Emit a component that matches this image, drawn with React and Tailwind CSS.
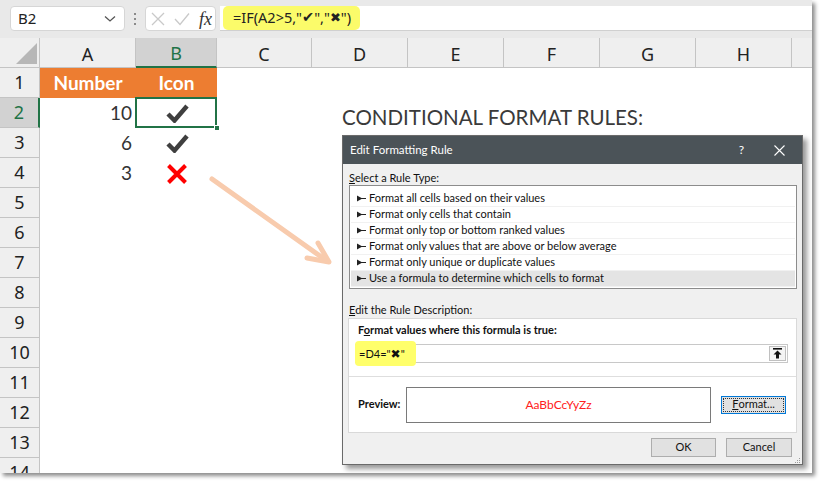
import React from 'react';

const cols = [
  { id: 'A', w: 'w-[96px]' },
  { id: 'B', w: 'w-[81px]', sel: true },
  { id: 'C', w: 'w-[95px]' },
  { id: 'D', w: 'w-[96px]' },
  { id: 'E', w: 'w-[96px]' },
  { id: 'F', w: 'w-[96px]' },
  { id: 'G', w: 'w-[96px]' },
  { id: 'H', w: 'w-[96px]' },
];

const rows = [
  { n: 1, a: 'Number', b: 'Icon', head: true },
  { n: 2, a: '10', b: 'check', sel: true },
  { n: 3, a: '6', b: 'check' },
  { n: 4, a: '3', b: 'cross' },
  { n: 5 }, { n: 6 }, { n: 7 }, { n: 8 }, { n: 9 }, { n: 10 },
  { n: 11 }, { n: 12 }, { n: 13 }, { n: 14 },
];

const ruleTypes = [
  'Format all cells based on their values',
  'Format only cells that contain',
  'Format only top or bottom ranked values',
  'Format only values that are above or below average',
  'Format only unique or duplicate values',
  'Use a formula to determine which cells to format',
];

const uiFont = { fontFamily: '"Noto Sans", "Open Sans", sans-serif' };
const cellFont = { fontFamily: 'Lato, "Liberation Sans", sans-serif' };
const dlgFont = { fontFamily: 'Lato, "Liberation Sans", sans-serif' };
const symFont = { fontFamily: '"DejaVu Sans", sans-serif' };

const ListArrow = () => (
  <svg width="9" height="7" viewBox="0 0 9 7" className="shrink-0">
    <polygon points="0,0.5 4.5,3 4.5,4 0,6.5" fill="#222" />
    <rect x="4" y="3" width="5" height="1" fill="#222" />
  </svg>
);

const FormulaBar = () => (
  <div className="flex h-[38px] shrink-0 items-start bg-[#e9e9e9] pt-[6px]" style={uiFont}>
    <div className="ml-[10px] flex h-[25px] w-[115px] items-center justify-between rounded-[4px] border border-[#d6d6d6] bg-white pl-[7px] pr-[8px]">
      <span className="text-[15px] text-[#222]">B2</span>
      <svg width="12" height="8" viewBox="0 0 12 8">
        <path d="M1 1.5 L6 6 L11 1.5" fill="none" stroke="#555" strokeWidth="1.3" />
      </svg>
    </div>
    <div className="ml-[9px] flex h-[25px] flex-col items-center justify-center gap-[3px]">
      <span className="h-[2px] w-[2px] bg-[#8a8a8a]" />
      <span className="h-[2px] w-[2px] bg-[#8a8a8a]" />
      <span className="h-[2px] w-[2px] bg-[#8a8a8a]" />
    </div>
    <div className="ml-[9px] flex h-[25px] w-[71px] items-center rounded-[4px] border border-[#d6d6d6] bg-white pl-[5px]">
      <svg width="14" height="14" viewBox="0 0 14 14">
        <path d="M1 1 L13 13 M13 1 L1 13" stroke="#c9c9c9" strokeWidth="1.3" />
      </svg>
      <svg width="16" height="14" viewBox="0 0 16 14" className="ml-[9px]">
        <path d="M1 7 L6 12.5 L15 1.5" fill="none" stroke="#c9c9c9" strokeWidth="1.3" />
      </svg>
      <span className="ml-[9px] text-[18px] italic leading-none text-[#333]" style={{ fontFamily: '"Liberation Serif", serif' }}>
        fx
      </span>
    </div>
    <div className="ml-[4px] flex h-[25px] flex-1 items-center border-b border-[#d0d0d0] bg-white pl-[3px]">
      <div className="flex h-[24px] w-[137px] items-center rounded-[5px] bg-[#fbfb6a] pl-[10px] text-[14.5px] text-[#222]">
        =IF(A2&gt;5,"<span className="font-bold" style={symFont}>✔</span>","<span className="text-[13px] font-bold" style={symFont}>✖</span>")
      </div>
    </div>
  </div>
);

const ColumnHeaders = () => (
  <div className="flex h-[30px] shrink-0 bg-[#efefef] text-[18px] text-[#222]" style={uiFont}>
    <div className="relative w-[40px] shrink-0 border-b border-r border-[#c4c4c4]">
      <svg width="40" height="30" viewBox="0 0 40 30" className="absolute left-0 top-0">
        <polygon points="16,26 37,26 37,5" fill="#b7b7b7" />
      </svg>
    </div>
    {cols.map((c) => (
      <div
        key={c.id}
        className={`${c.w} flex shrink-0 items-center justify-center border-r ${
          c.sel
            ? 'border-b-2 border-r-[#c4c4c4] border-b-[#217346] bg-[#d2d2d2] text-[#217346]'
            : 'border-b border-[#c4c4c4]'
        }`}
      >
        <span className="pt-[3px]">{c.id}</span>
      </div>
    ))}
    <div className="flex-1 border-b border-[#c4c4c4]" />
  </div>
);

// cell values drawn as icons, like Segoe UI Symbol renders them in Excel
const CellIcon = ({ kind }) => {
  if (kind === 'check') {
    return (
      <svg width="24" height="20" viewBox="0 0 24 20" className="mt-[-1px]">
        <path d="M3 11 L9.5 17.5 L22 3" fill="none" stroke="#3f3f3f" strokeWidth="4.5" strokeLinejoin="miter" />
      </svg>
    );
  }
  if (kind === 'cross') {
    return (
      <svg width="22" height="22" viewBox="0 0 22 22" className="mt-[1px]">
        <path d="M2.5 2.5 L19.5 19.5 M19.5 2.5 L2.5 19.5" stroke="#ff0000" strokeWidth="4" />
      </svg>
    );
  }
  return null;
};

const Grid = () => (
  <div className="flex flex-1 flex-col overflow-hidden">
    {rows.map((r) => (
      <div key={r.n} className="flex h-[30px] shrink-0">
        <div
          className={`flex w-[40px] shrink-0 items-center justify-center border-b border-[#c4c4c4] text-[18px] ${
            r.sel
              ? 'border-r-2 border-r-[#217346] bg-[#d2d2d2] text-[#217346]'
              : 'border-r border-r-[#c4c4c4] bg-[#efefef] text-[#222]'
          }`}
          style={uiFont}
        >
          {r.n}
        </div>
        <div
          className={`flex w-[96px] shrink-0 items-center text-[19px] ${
            r.head ? 'justify-center bg-[#ed7d31] font-bold text-white' : 'justify-end pr-[4px] text-[#333]'
          }`}
          style={cellFont}
        >
          {r.a}
        </div>
        <div
          className={`relative flex w-[81px] shrink-0 items-center justify-center text-[19px] ${
            r.head ? 'bg-[#ed7d31] font-bold text-white' : ''
          }`}
          style={cellFont}
        >
          {r.head ? r.b : <CellIcon kind={r.b} />}
          {r.sel && (
            <>
              <div className="absolute -left-px -top-px bottom-0 right-0 border-2 border-[#217346]" />
              <div className="absolute -bottom-[3px] -right-[3px] h-[6px] w-[6px] border border-white bg-[#217346]" />
            </>
          )}
        </div>
        <div className="flex-1" />
      </div>
    ))}
  </div>
);

const Btn = ({ children, className = '' }) => (
  <div
    className={`flex items-center justify-center border border-[#adadad] bg-[#e1e1e1] text-[11px] text-[#111] ${className}`}
  >
    {children}
  </div>
);

const Dialog = () => (
  <div
    className="absolute left-[342px] top-[135px] flex h-[330px] w-[461px] flex-col border border-[#6a6a6a] bg-[#f0f0f0] shadow-[4px_4px_5px_rgba(0,0,0,0.4)]"
    style={dlgFont}
  >
    <div className="flex h-[28px] shrink-0 items-center bg-[#4b5358] pl-[7px] text-[11.5px] text-white">
      <span>Edit Formatting Rule</span>
      <span className="ml-auto mr-[30px] text-[12px]">?</span>
      <svg width="11" height="11" viewBox="0 0 11 11" className="mr-[17px]">
        <path d="M0.5 0.5 L10.5 10.5 M10.5 0.5 L0.5 10.5" stroke="#fff" strokeWidth="1.1" />
      </svg>
    </div>

    <div className="flex flex-1 flex-col px-[6px] text-[11px] text-[#111]">
      <div className="mt-[7px] h-[14px] leading-[14px]">
        <span className="underline">S</span>elect a Rule Type:
      </div>
      <div className="flex w-[448px] flex-col border border-[#8c8c8c] bg-white pb-[1px] pt-[5px]">
        {ruleTypes.map((t, i) => (
          <div
            key={t}
            className={`mx-px flex h-[16px] items-center gap-[3px] border-b border-[#f1f1f1] pl-[6px] ${
              i === ruleTypes.length - 1 ? 'bg-[#e4e4e4]' : ''
            }`}
          >
            <ListArrow />
            <span>{t}</span>
          </div>
        ))}
      </div>

      <div className="mt-[14px] h-[14px] leading-[14px]">
        <span className="underline">E</span>dit the Rule Description:
      </div>
      <div className="-ml-px mt-px flex h-[115px] w-[449px] flex-col border border-[#d9d9d9] bg-white">
        <div className="flex h-[58px] shrink-0 flex-col border-b border-[#dedede]">
          <div className="ml-[9px] mt-[4px] h-[14px] font-bold leading-[14px]">
            F<span className="underline">o</span>rmat values where this formula is true:
          </div>
          <div className="relative ml-[6px] mt-[7px] flex h-[19px] w-[433px] items-center border border-[#c8c8c8] bg-white">
            <div className="absolute -left-px -top-[4px] h-[25px] w-[61px] rounded-[4px] bg-[#ffff6b]" />
            <span className="relative ml-[3px]">
              =D4="<span className="text-[12px] font-bold" style={symFont}>✖</span>"
            </span>
            <div className="relative ml-auto mr-px flex h-[15px] w-[17px] items-center justify-center border border-[#c0c0c0] bg-[#f4f4f4]">
              <svg width="9" height="11" viewBox="0 0 9 11">
                <rect x="0" y="0" width="9" height="1.6" fill="#111" />
                <path d="M4.5 2.5 L8.5 6.5 L6 6.5 L6 10.5 L3 10.5 L3 6.5 L0.5 6.5 Z" fill="#111" />
              </svg>
            </div>
          </div>
        </div>
        <div className="flex flex-1 items-center">
          <div className="ml-[9px] w-[48px] font-bold">Preview:</div>
          <div className="flex h-[36px] w-[305px] items-center justify-center border border-[#7a7a7a] bg-white text-[12px] text-[#ff2020]">
            AaBbCcYyZz
          </div>
          <div className="ml-[10px] flex h-[18px] w-[65px] items-center justify-center border border-[#0078d7] bg-[#e1e1e1] p-px">
            <div className="flex h-full w-full items-center justify-center border border-dotted border-[#333] text-[11px]">
              <span className="underline">F</span>ormat...
            </div>
          </div>
        </div>
      </div>

      <div className="relative mt-[5px] flex justify-end gap-[10px] pr-[4px]">
        <Btn className="h-[19px] w-[65px]">OK</Btn>
        <Btn className="h-[19px] w-[66px]">Cancel</Btn>
        <svg width="6" height="6" viewBox="0 0 6 6" className="absolute -right-[5px] top-[20px]">
          <rect x="4" y="0" width="1" height="1" fill="#9a9a9a" />
          <rect x="2" y="2" width="1" height="1" fill="#9a9a9a" />
          <rect x="4" y="2" width="1" height="1" fill="#9a9a9a" />
          <rect x="0" y="4" width="1" height="1" fill="#9a9a9a" />
          <rect x="2" y="4" width="1" height="1" fill="#9a9a9a" />
          <rect x="4" y="4" width="1" height="1" fill="#9a9a9a" />
        </svg>
      </div>
    </div>
  </div>
);

export default function App() {
  return (
    <div className="h-[482px] w-[820px] overflow-hidden bg-white">
      <div className="relative flex h-[473px] w-[812px] flex-col overflow-hidden bg-white shadow-[3px_3px_4px_rgba(0,0,0,0.45)]">
        <FormulaBar />
        <ColumnHeaders />
        <Grid />

        <svg
          width="130"
          height="100"
          viewBox="0 0 130 100"
          className="pointer-events-none absolute left-[205px] top-[172px]"
        >
          <g fill="none" stroke="#f8cbad" strokeWidth="5" strokeLinecap="round" strokeLinejoin="round">
            <path d="M7 7 L122 89" />
            <path d="M102 86 L124 90 L113 71" />
          </g>
        </svg>

        <div
          className="absolute left-[342px] top-[104px] text-[20.5px] leading-[26px] text-[#3a3a3a]"
          style={cellFont}
        >
          CONDITIONAL FORMAT RULES:
        </div>

        <Dialog />
      </div>
    </div>
  );
}
